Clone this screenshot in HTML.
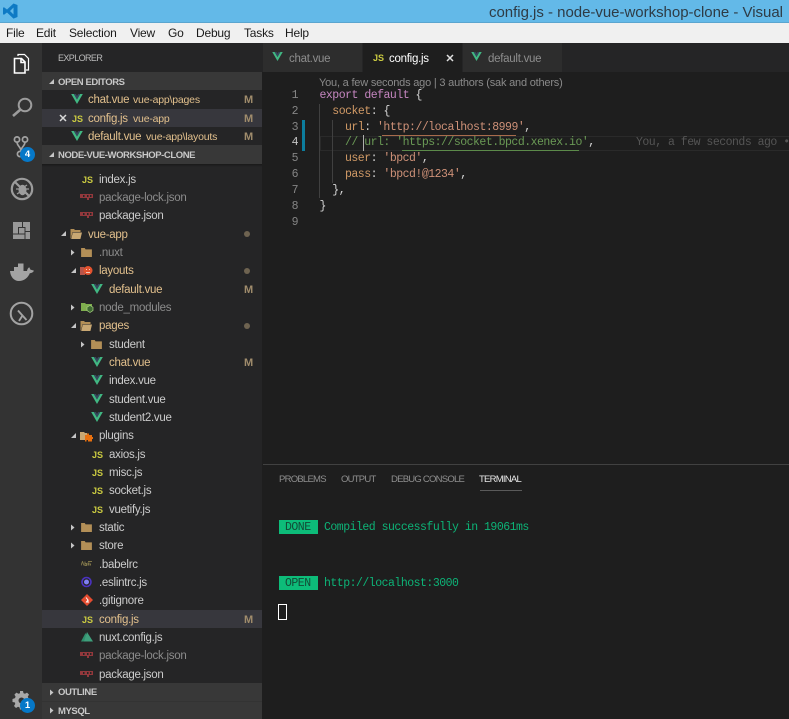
<!DOCTYPE html>
<html><head><meta charset="utf-8"><style>
html,body{margin:0;padding:0;background:#1e1e1e}
#a{position:relative;width:789px;height:719px;overflow:hidden;background:#1e1e1e;font-family:"Liberation Sans",sans-serif;font-size:12px;color:#ccc}
#a div,#a svg{position:absolute}
.t{white-space:nowrap;line-height:16px;height:16px;font-size:11.5px;letter-spacing:-.27px;margin-top:1px}
.mn{font-size:12px;letter-spacing:-.2px;color:#1a1a1a;top:25px;margin-top:0}
.m{font-family:"Liberation Mono",monospace;font-size:11.5px;letter-spacing:-.5px;white-space:pre;line-height:16px;height:16px;margin-top:1px}
.g{color:#e2c08d}.d{color:#8c8c8c}.mk{color:#a08c6c;font-weight:bold;font-size:11px;left:244px;letter-spacing:0}
.js{color:#cbcb41;font-weight:bold;font-size:9px;letter-spacing:0;margin-top:0}
.h{color:#c8c8c8;font-weight:bold;font-size:9.5px;letter-spacing:-.42px}
.sub{font-size:10.5px;letter-spacing:-.2px}
.k{color:#c586c0}.o{color:#d19a66}.s{color:#ce9178}.c{color:#6a9955}.w{color:#d4d4d4}
.n{width:20px;text-align:right;color:#858585;left:278px}
.pt{font-size:9.5px;color:#8f8f8f;letter-spacing:-.75px;top:472px;margin-top:0}
</style></head><body><div id="a">
<svg width="0" height="0" style="position:absolute"><defs>
<symbol id="v" viewBox="0 0 14 12"><path d="M0 0h3.2L7 6.6 10.8 0H14L7 12z" fill="#41b883"/><path d="M3.2 0h2.5L7 2.4 8.3 0h2.5L7 6.6z" fill="#35495e"/></symbol>
<symbol id="fo" viewBox="0 0 12 10"><path d="M0 0h4l1 1.500h7V10H0z" fill="#b38f57"/></symbol>
<symbol id="fe" viewBox="0 0 12 10"><path d="M.5 0h3.500l1 1h5.500v2H2.600L.9 9.500H.5z" fill="#b38f57"/><path d="M2.800 3.500H12L10.400 10H1.200z" fill="#c9a873"/></symbol>
<symbol id="pk" viewBox="0 0 13 6"><path d="M0 0h13v4H9v2H7V4H0z" fill="#93383c"/><path d="M3 1h1.500v2H3zM7 1h1.500v2H7zM10 1h1.500v2H10z" fill="#252526"/></symbol>
</defs></svg>

<!-- title bar -->
<div style="left:0;top:0;width:789px;height:22px;background:#63b9e8"></div>
<div style="left:0;top:22px;width:789px;height:1px;background:#5aa5cf"></div>
<svg style="left:2px;top:3px" width="16" height="16" viewBox="0 0 16 16"><path d="M11.500.5 15.500 2v12l-4 1.600L5 9.500l-3 2.300-1-.6V4.800l1-.6 3 2.300zM11.500 4.500 8 8l3.500 3.500z" fill="#0e7ac4"/></svg>
<div class="t" style="left:489px;top:3px;font-size:15px;color:#2e3b45;line-height:18px;height:18px;letter-spacing:-.02px">config.js - node-vue-workshop-clone - Visual</div>

<!-- menu -->
<div style="left:0;top:23px;width:789px;height:20px;background:#f0f0f0"></div>
<div class="t mn" style="left:6px">File</div>
<div class="t mn" style="left:36px">Edit</div>
<div class="t mn" style="left:69px">Selection</div>
<div class="t mn" style="left:130px">View</div>
<div class="t mn" style="left:168px">Go</div>
<div class="t mn" style="left:196px">Debug</div>
<div class="t mn" style="left:244px">Tasks</div>
<div class="t mn" style="left:285px">Help</div>

<!-- activity bar -->
<div style="left:0;top:43px;width:42px;height:676px;background:#333"></div>
<svg style="left:13px;top:53px" width="18" height="22" viewBox="0 0 18 22" fill="none" stroke="#fff" stroke-width="1.600"><path d="M1.500 5.500h7l3.500 3.500v11H1.500z"/><path d="M8 5.500V9.500h4"/><path d="M5 3V1.500h6.500l4 4V17H13" stroke-width="1.200"/></svg>
<svg style="left:11px;top:96px" width="22" height="22" viewBox="0 0 22 22" fill="none" stroke="#9c9c9c"><circle cx="14" cy="9" r="6.300" stroke-width="2"/><path d="M9.500 13.500 2 20" stroke-width="2.600"/></svg>
<svg style="left:12px;top:135px" width="20" height="26" viewBox="0 0 20 26" fill="none" stroke="#a3a3a3" stroke-width="1.700"><circle cx="5" cy="4.500" r="2.600"/><circle cx="13" cy="4.500" r="2.600"/><circle cx="8" cy="19" r="2.600"/><path d="M5 7c0 4 4 5 4 9M13 7c0 4-4 5-4 9"/></svg>
<div style="left:20px;top:147px;width:15px;height:15px;border-radius:50%;background:#0678c8;color:#fff;font-weight:bold;font-size:9.500px;line-height:15px;text-align:center">4</div>
<svg style="left:10px;top:177px" width="24" height="24" viewBox="0 0 24 24" fill="none" stroke="#9c9c9c"><circle cx="12" cy="12" r="10.200" stroke-width="2.200"/><ellipse cx="12.500" cy="13" rx="4" ry="5.200" fill="#9c9c9c" stroke="none"/><path d="M8 8l3 2M17 8l-3 2M6 12h3M16 12h3M7 17l3-2M18 17l-3-2" stroke-width="1.300"/><path d="M5 5l14 14" stroke-width="2.200"/></svg>
<svg style="left:13px;top:222px" width="18" height="18" viewBox="0 0 18 18"><path fill="#989898" d="M0 0h17v17H0z"/><path fill="none" stroke="#333" d="M5.500 5.500h6.500v6.500H5.500zM9.500 0v5.500M12 9.500h5M0 12h5.500M12 12v5"/></svg>
<svg style="left:10px;top:263px" width="24" height="19" viewBox="0 0 24 19"><path fill="#a3a3a3" d="M0 8h17c.3-2 1.300-3.200 2.300-3.700.5 1.200 1 2 1.400 2.600 1 0 2 .2 3.300.9-1 1.800-2.500 2.400-4.200 2.400C18.200 14.200 14.500 18 8.800 18 4 18 .5 14 0 8z"/><path fill="#a3a3a3" d="M4 4h9.500v4H4zM8 .5h5.500V4H8z"/></svg>
<svg style="left:9px;top:301px" width="25" height="25" viewBox="0 0 25 25" fill="none" stroke="#a3a3a3"><circle cx="12.500" cy="12.500" r="10.800" stroke-width="2"/><path d="M9 9.500 17.500 19M13.500 14.500 10 20" stroke-width="1.900"/></svg>
<svg style="left:12px;top:690px" width="20" height="20" viewBox="0 0 20 20"><path fill="#a8a8a8" fill-rule="evenodd" d="M8 1h3l.5 2.200 1.500.6 2-1.200 2 2-1.200 2 .6 1.500L18.500 9v3l-2.100.5-.6 1.500 1.200 2-2 2-2-1.200-1.500.6L11 19.500H8l-.5-2.100-1.500-.6-2 1.200-2-2 1.200-2L3 12.500.5 12V9l2.500-.9.6-1.500-1.200-2 2-2 2 1.200L8 3.200zM9.500 7.500a3 3 0 1 0 0 6 3 3 0 0 0 0-6z"/></svg>
<div style="left:20px;top:698px;width:15px;height:15px;border-radius:50%;background:#0678c8;color:#fff;font-weight:bold;font-size:9.500px;line-height:15px;text-align:center">1</div>

<!-- sidebar -->
<div style="left:42px;top:43px;width:220px;height:676px;background:#252526"></div>
<div class="t" style="left:58px;top:49px;font-size:9px;color:#bbb;letter-spacing:-.6px">EXPLORER</div>

<div style="left:42px;top:72px;width:220px;height:18px;background:#383838"></div>
<svg style="left:48px;top:78px" width="7" height="7" viewBox="0 0 7 7"><path d="M1 6h5V1z" fill="#c5c5c5"/></svg>
<div class="t h" style="left:58px;top:74px">OPEN EDITORS</div>

<svg style="left:71px;top:94px" width="12" height="10"><use href="#v"/></svg>
<div class="t g" style="left:88px;top:91px">chat.vue</div>
<div class="t g sub" style="left:133px;top:91px">vue-app\pages</div>
<div class="t mk" style="top:91px">M</div>

<div style="left:42px;top:109px;width:220px;height:18px;background:#37373d"></div>
<svg style="left:59px;top:114px" width="8" height="8" viewBox="0 0 8 8"><path d="M1 1l6 6M7 1 1 7" stroke="#d8d8d8" stroke-width="1.500"/></svg>
<div class="t js" style="left:72px;top:111px">JS</div>
<div class="t g" style="left:88px;top:110px">config.js</div>
<div class="t g sub" style="left:133px;top:110px">vue-app</div>
<div class="t mk" style="top:110px">M</div>

<svg style="left:71px;top:131px" width="12" height="10"><use href="#v"/></svg>
<div class="t g" style="left:88px;top:128px">default.vue</div>
<div class="t g sub" style="left:146px;top:128px">vue-app\layouts</div>
<div class="t mk" style="top:128px">M</div>

<div style="left:42px;top:145px;width:220px;height:19px;background:#383838"></div>
<div style="left:42px;top:164px;width:220px;height:3px;background:linear-gradient(#191919,#252526)"></div>
<svg style="left:48px;top:151px" width="7" height="7" viewBox="0 0 7 7"><path d="M1 6h5V1z" fill="#c5c5c5"/></svg>
<div class="t h" style="left:58px;top:147px">NODE-VUE-WORKSHOP-CLONE</div>

<div class="t js" style="left:82px;top:172px">JS</div>
<div class="t" style="left:99px;top:171px">index.js</div>
<svg style="left:80px;top:194px" width="13" height="6"><use href="#pk"/></svg>
<div class="t d" style="left:99px;top:189px">package-lock.json</div>
<svg style="left:80px;top:212px" width="13" height="6"><use href="#pk"/></svg>
<div class="t" style="left:99px;top:207px">package.json</div>

<svg style="left:60px;top:230px" width="7" height="7" viewBox="0 0 7 7"><path d="M1 6h5V1z" fill="#c5c5c5"/></svg>
<svg style="left:70px;top:229px" width="12" height="10"><use href="#fe"/></svg>
<div class="t g" style="left:88px;top:226px">vue-app</div>
<div style="left:244px;top:231px;width:6px;height:6px;border-radius:50%;background:#6e6350"></div>

<svg style="left:70px;top:249px" width="5" height="7" viewBox="0 0 5 7"><path d="M1 .5 4.500 3.500 1 6.500z" fill="#c5c5c5"/></svg>
<svg style="left:81px;top:248px" width="11" height="9"><use href="#fo"/></svg>
<div class="t d" style="left:99px;top:244px">.nuxt</div>

<svg style="left:70px;top:267px" width="7" height="7" viewBox="0 0 7 7"><path d="M1 6h5V1z" fill="#c5c5c5"/></svg>
<svg style="left:80px;top:264px" width="13" height="12" viewBox="0 0 13 12"><path d="M0 3h4l1 1v7H0z" fill="#b8554a"/><circle cx="8" cy="6.500" r="4.500" fill="#e4532f"/><path d="M6 5h1v1H6zM9 5h1v1H9zM6 8h4v1H6z" fill="#f4c8b8"/></svg>
<div class="t g" style="left:99px;top:262px">layouts</div>
<div style="left:244px;top:268px;width:6px;height:6px;border-radius:50%;background:#6e6350"></div>

<svg style="left:91px;top:284px" width="12" height="10"><use href="#v"/></svg>
<div class="t g" style="left:109px;top:281px">default.vue</div>
<div class="t mk" style="top:281px">M</div>

<svg style="left:70px;top:304px" width="5" height="7" viewBox="0 0 5 7"><path d="M1 .5 4.500 3.500 1 6.500z" fill="#c5c5c5"/></svg>
<svg style="left:81px;top:302px" width="13" height="11" viewBox="0 0 13 11"><path d="M0 1h4l1 1h6v7H0z" fill="#7fae4e"/><path d="M9 3.500l3 1.700v3.400L9 10.500 6 8.600V5.200z" fill="#3f6a33" stroke="#a8d080" stroke-width=".7"/></svg>
<div class="t d" style="left:99px;top:299px">node_modules</div>

<svg style="left:70px;top:322px" width="7" height="7" viewBox="0 0 7 7"><path d="M1 6h5V1z" fill="#c5c5c5"/></svg>
<svg style="left:80px;top:321px" width="12" height="10"><use href="#fe"/></svg>
<div class="t g" style="left:99px;top:317px">pages</div>
<div style="left:244px;top:323px;width:6px;height:6px;border-radius:50%;background:#6e6350"></div>

<svg style="left:80px;top:341px" width="5" height="7" viewBox="0 0 5 7"><path d="M1 .5 4.500 3.500 1 6.500z" fill="#c5c5c5"/></svg>
<svg style="left:91px;top:340px" width="11" height="9"><use href="#fo"/></svg>
<div class="t" style="left:109px;top:336px">student</div>

<svg style="left:91px;top:357px" width="12" height="10"><use href="#v"/></svg>
<div class="t g" style="left:109px;top:354px">chat.vue</div>
<div class="t mk" style="top:354px">M</div>
<svg style="left:91px;top:375px" width="12" height="10"><use href="#v"/></svg>
<div class="t" style="left:109px;top:372px">index.vue</div>
<svg style="left:91px;top:394px" width="12" height="10"><use href="#v"/></svg>
<div class="t" style="left:109px;top:391px">student.vue</div>
<svg style="left:91px;top:412px" width="12" height="10"><use href="#v"/></svg>
<div class="t" style="left:109px;top:409px">student2.vue</div>

<svg style="left:70px;top:432px" width="7" height="7" viewBox="0 0 7 7"><path d="M1 6h5V1z" fill="#c5c5c5"/></svg>
<svg style="left:80px;top:430px" width="13" height="12" viewBox="0 0 13 12"><path d="M0 2h4l1 1h2v7H0z" fill="#c9a873"/><path d="M5 5h2V3.500h2V5h3v2h1v2h-1v2.500H8V10H6.500v1.500H5z" fill="#e8700f"/></svg>
<div class="t" style="left:99px;top:427px">plugins</div>

<div class="t js" style="left:92px;top:447px">JS</div>
<div class="t" style="left:109px;top:446px">axios.js</div>
<div class="t js" style="left:92px;top:465px">JS</div>
<div class="t" style="left:109px;top:464px">misc.js</div>
<div class="t js" style="left:92px;top:483px">JS</div>
<div class="t" style="left:109px;top:482px">socket.js</div>
<div class="t js" style="left:92px;top:502px">JS</div>
<div class="t" style="left:109px;top:501px">vuetify.js</div>

<svg style="left:70px;top:524px" width="5" height="7" viewBox="0 0 5 7"><path d="M1 .5 4.500 3.500 1 6.500z" fill="#c5c5c5"/></svg>
<svg style="left:81px;top:523px" width="11" height="9"><use href="#fo"/></svg>
<div class="t" style="left:99px;top:519px">static</div>
<svg style="left:70px;top:542px" width="5" height="7" viewBox="0 0 5 7"><path d="M1 .5 4.500 3.500 1 6.500z" fill="#c5c5c5"/></svg>
<svg style="left:81px;top:541px" width="11" height="9"><use href="#fo"/></svg>
<div class="t" style="left:99px;top:537px">store</div>

<svg style="left:81px;top:561px" width="11" height="5" viewBox="0 0 11 5"><path d="M0 4.500 1.500.5 3 4.500M4 .5v4h1.500V2.500H4M7 4.500V1.500M8 4.500V1.500M9.500 2.500v2M7 .5h4" stroke="#7d7448" fill="none"/></svg>
<div class="t" style="left:99px;top:556px">.babelrc</div>

<svg style="left:81px;top:576px" width="11" height="12" viewBox="0 0 11 12"><circle cx="5.500" cy="6" r="4.500" fill="none" stroke="#4b32c3" stroke-width="1.600"/><circle cx="5.500" cy="6" r="2.500" fill="#8080f2"/></svg>
<div class="t" style="left:99px;top:574px">.eslintrc.js</div>

<svg style="left:81px;top:594px" width="12" height="12" viewBox="0 0 12 12"><path d="M6 0l6 6-6 6-6-6z" fill="#e44c30"/><path d="M5 3.500 7 6v3M7 6 5 8.500" stroke="#fff" stroke-width="1" fill="none"/></svg>
<div class="t" style="left:99px;top:592px">.gitignore</div>

<div style="left:42px;top:610px;width:220px;height:18px;background:#37373d"></div>
<div class="t js" style="left:82px;top:612px">JS</div>
<div class="t g" style="left:99px;top:611px">config.js</div>
<div class="t mk" style="top:611px">M</div>

<svg style="left:81px;top:632px" width="12" height="10" viewBox="0 0 12 10"><path d="M4.500 1 0 9.500h4L6.500 5z" fill="#2f8f6c"/><path d="M6 0 12 9.500H3z" fill="#3f9f7c"/></svg>
<div class="t" style="left:99px;top:629px">nuxt.config.js</div>
<svg style="left:80px;top:652px" width="13" height="6"><use href="#pk"/></svg>
<div class="t d" style="left:99px;top:647px">package-lock.json</div>
<svg style="left:80px;top:671px" width="13" height="6"><use href="#pk"/></svg>
<div class="t" style="left:99px;top:666px">package.json</div>

<div style="left:42px;top:683px;width:220px;height:36px;background:#383838"></div>
<div style="left:42px;top:701px;width:220px;height:1px;background:#333"></div>
<svg style="left:49px;top:689px" width="5" height="7" viewBox="0 0 5 7"><path d="M1 .5 4.500 3.500 1 6.500z" fill="#c5c5c5"/></svg>
<div class="t h" style="left:58px;top:684px">OUTLINE</div>
<svg style="left:49px;top:707px" width="5" height="7" viewBox="0 0 5 7"><path d="M1 .5 4.500 3.500 1 6.500z" fill="#c5c5c5"/></svg>
<div class="t h" style="left:58px;top:703px">MYSQL</div>

<!-- tabs -->
<div style="left:262px;top:43px;width:527px;height:29px;background:#252526"></div>
<div style="left:263px;top:43px;width:99px;height:29px;background:#2d2d2d"></div>
<div style="left:363px;top:43px;width:99px;height:29px;background:#1e1e1e"></div>
<div style="left:463px;top:43px;width:99px;height:29px;background:#2d2d2d"></div>
<svg style="left:272px;top:52px" width="11" height="9"><use href="#v"/></svg>
<div class="t" style="left:289px;top:50px;color:#8e8e8e">chat.vue</div>
<div class="t js" style="left:373px;top:50px">JS</div>
<div class="t" style="left:389px;top:50px;color:#fff">config.js</div>
<svg style="left:446px;top:54px" width="8" height="8" viewBox="0 0 8 8"><path d="M1 1l6 6M7 1 1 7" stroke="#e0e0e0" stroke-width="1.500"/></svg>
<svg style="left:471px;top:52px" width="11" height="9"><use href="#v"/></svg>
<div class="t" style="left:488px;top:50px;color:#8e8e8e">default.vue</div>

<!-- editor -->
<div class="t" style="left:319px;top:74px;font-size:11px;color:#8a8a8a;letter-spacing:-.2px">You, a few seconds ago | 3 authors (sak and others)</div>

<div style="left:320px;top:136px;width:469px;height:15px;border:1px solid #2a2a2a;border-right:0;box-sizing:border-box"></div>
<div style="left:319px;top:104px;width:1px;height:94px;background:#404040"></div>
<div style="left:332px;top:120px;width:1px;height:63px;background:#404040"></div>
<div style="left:302px;top:120px;width:3px;height:31px;background:#0c7d9d"></div>

<div class="m n" style="top:87px">1</div>
<div class="m n" style="top:103px">2</div>
<div class="m n" style="top:119px">3</div>
<div class="m n" style="top:134px;color:#c6c6c6">4</div>
<div class="m n" style="top:150px">5</div>
<div class="m n" style="top:166px">6</div>
<div class="m n" style="top:182px">7</div>
<div class="m n" style="top:198px">8</div>
<div class="m n" style="top:214px">9</div>

<div class="m" style="left:319.500px;top:87px"><span class="k">export</span> <span class="k">default</span> <span class="w">{</span></div>
<div class="m" style="left:332.300px;top:103px"><span class="o">socket</span><span class="w">:</span> <span class="w">{</span></div>
<div class="m" style="left:345px;top:119px"><span class="o">url</span><span class="w">:</span> <span class="s">'http://localhost:8999'</span><span class="w">,</span></div>
<div class="m c" style="left:345px;top:134px">// url: 'https://socket.bpcd.xenex.io'<span class="w">,</span></div>
<div class="m" style="left:636px;top:134px;color:#555">You, a few seconds ago •</div>
<div class="m" style="left:345px;top:150px"><span class="o">user</span><span class="w">:</span> <span class="s">'bpcd'</span><span class="w">,</span></div>
<div class="m" style="left:345px;top:166px"><span class="o">pass</span><span class="w">:</span> <span class="s">'bpcd!@1234'</span><span class="w">,</span></div>
<div class="m w" style="left:332.300px;top:182px">},</div>
<div class="m w" style="left:319.500px;top:198px">}</div>
<div style="left:382px;top:135px;width:134px;height:1px;background:#a86c4c"></div>
<div style="left:402px;top:150px;width:177px;height:1px;background:#5c8a4a"></div>
<div style="left:363px;top:135px;width:1px;height:16px;background:#aeafad"></div>

<!-- panel -->
<div style="left:263px;top:464px;width:526px;height:1px;background:#414141"></div>
<div class="t pt" style="left:279px">PROBLEMS</div>
<div class="t pt" style="left:341px">OUTPUT</div>
<div class="t pt" style="left:391px">DEBUG CONSOLE</div>
<div class="t pt" style="left:479px;color:#e7e7e7">TERMINAL</div>
<div style="left:480px;top:490px;width:42px;height:1px;background:#5a5a5a"></div>

<div style="left:279px;top:520px;width:39px;height:14px;background:#0dbc79"></div>
<div class="m" style="left:285px;top:519px;color:#134a36">DONE</div>
<div class="m" style="left:324px;top:519px;color:#0db377">Compiled successfully in 19061ms</div>
<div style="left:279px;top:576px;width:39px;height:14px;background:#0dbc79"></div>
<div class="m" style="left:285px;top:575px;color:#134a36">OPEN</div>
<div class="m" style="left:324px;top:575px;color:#0db377">http://localhost:3000</div>
<div style="left:278px;top:604px;width:9px;height:16px;border:1px solid #fff;box-sizing:border-box"></div>
</div></body></html>
